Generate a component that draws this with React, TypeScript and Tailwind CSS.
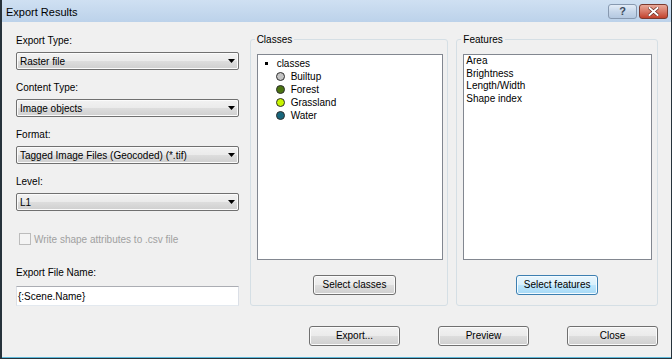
import React from 'react';

const font = "font-['Liberation_Sans',Arial,sans-serif]";

const btnBase =
  'h-[20px] rounded-[3px] border text-[10px] leading-[18px] text-black flex items-center justify-center';
const btnGray =
  'border-[#707070] bg-[linear-gradient(to_bottom,#f2f2f2_0%,#ebebeb_48%,#dddddd_52%,#cfcfcf_100%)] shadow-[inset_0_0_0_1px_#fbfbfb]';
const btnHot =
  'border-[#3c7fb1] bg-[linear-gradient(to_bottom,#eaf6fd_0%,#d9f0fc_48%,#bee6fd_52%,#a7d9f5_100%)] shadow-[inset_0_0_0_1px_#f4fbff]';

const Dropdown = ({ value }: { value: string }) => (
  <div className="h-[18px] w-full flex items-center justify-between rounded-[2px] border border-[#707070] bg-[linear-gradient(to_bottom,#f2f2f2_0%,#ebebeb_48%,#dddddd_52%,#cfcfcf_100%)] shadow-[inset_0_0_0_1px_#fbfbfb] pl-[3px] pr-[3px]">
    <span className="text-[10px] leading-[13px] text-black">{value}</span>
    <svg width="7" height="4" viewBox="0 0 7 4">
      <path d="M0 0h7L3.5 4z" fill="#000" />
    </svg>
  </div>
);

const fields = [
  { label: 'Export Type:', value: 'Raster file' },
  { label: 'Content Type:', value: 'Image objects' },
  { label: 'Format:', value: 'Tagged Image Files (Geocoded) (*.tif)' },
  { label: 'Level:', value: 'L1' },
];

const classes = [
  { name: 'Builtup', color: 'bg-[#c4c4c4]' },
  { name: 'Forest', color: 'bg-[#4b7410]' },
  { name: 'Grassland', color: 'bg-[#c8f400]' },
  { name: 'Water', color: 'bg-[#17667c]' },
];

const features = ['Area', 'Brightness', 'Length/Width', 'Shape index'];

const App: React.FC = () => {
  return (
    <div className={`${font} w-[672px] h-[359px] flex flex-col border-l-2 border-r border-b border-[#26323b] bg-[#f0f0f0] overflow-hidden`}>
      {/* title bar */}
      <div className="h-[22px] flex items-start bg-[linear-gradient(to_bottom,#cfe0f2,#bcd2ea)] pl-[4px] pr-[3px]">
        <span className="text-[11px] leading-[13px] mt-[6px] text-black">Export Results</span>
        <div className="ml-auto mt-[4px] flex gap-[2px]">
          <div className="w-[29px] h-[15px] rounded-[3px] border border-[#8799b0] bg-[linear-gradient(to_bottom,#e3ecf7,#c7d7ea_50%,#b4c8e0)] flex items-center justify-center">
            <span className="text-[11px] leading-[11px] font-bold text-[#3c4a5c]">?</span>
          </div>
          <div className="w-[29px] h-[15px] rounded-[3px] border border-[#7b3a2f] bg-[linear-gradient(to_bottom,#e9a999,#d77866_50%,#c2422d)] flex items-center justify-center">
            <svg width="11" height="9" viewBox="0 0 11 9">
              <path d="M1.5 1L9.5 8M9.5 1L1.5 8" stroke="#5a2018" strokeWidth="3.2" strokeLinecap="square" />
              <path d="M1.5 1L9.5 8M9.5 1L1.5 8" stroke="#fff" strokeWidth="2" strokeLinecap="square" />
            </svg>
          </div>
        </div>
      </div>

      {/* body */}
      <div className="flex-1 flex flex-col border-b border-[#5eb9da] pl-[14px] pr-[13px] pt-[12px]">
        <div className="flex items-start">
          {/* left column */}
          <div className="w-[223px] flex flex-col">
            {fields.map(f => (
              <div key={f.label} className="flex flex-col mb-[11px]">
                <span className="h-[13px] text-[10px] leading-[13px] text-black mb-[5px]">{f.label}</span>
                <Dropdown value={f.value} />
              </div>
            ))}
            <div className="mt-[11px] h-[12px] flex items-center">
              <div className="ml-[3px] w-[12px] h-[12px] border border-[#bcbcbc] bg-[#f4f4f4]" />
              <span className="ml-[3px] text-[10px] leading-[13px] text-[#a0a0a0]">Write shape attributes to .csv file</span>
            </div>
            <span className="mt-[21px] h-[13px] text-[10px] leading-[13px] text-black">Export File Name:</span>
            <div className="mt-[7px] h-[20px] bg-white border border-[#dbdfe6] border-t-[#abadb3] border-b-[#e3e9ef] flex items-center pl-[1px]">
              <span className="text-[10px] leading-[13px] text-black">{'{:Scene.Name}'}</span>
            </div>
          </div>

          {/* classes group */}
          <div className="relative ml-[11px] mt-[5px] w-[199px] h-[267px] rounded-[3px] border border-[#d5dfe5] flex flex-col">
            <span className="absolute -top-[7px] left-[4px] px-[2px] bg-[#f0f0f0] text-[10px] leading-[13px] text-black">Classes</span>
            <div className="ml-[6px] mt-[14px] w-[186px] h-[206px] bg-white border border-[#828790] pt-[1px]">
              <div className="h-[14px] flex items-center pl-[7px]">
                <div className="w-[3px] h-[3px] bg-black" />
                <span className="ml-[9px] text-[10px] leading-[13px] text-black">classes</span>
              </div>
              {classes.map(c => (
                <div key={c.name} className="h-[13px] flex items-center pl-[18px]">
                  <div className={`w-[9px] h-[9px] rounded-full border border-[#2e2e2e] ${c.color}`} />
                  <span className="ml-[6px] text-[10px] leading-[13px] text-black">{c.name}</span>
                </div>
              ))}
            </div>
            <div className="mt-[15px] flex justify-center pl-[11px]">
              <button className={`${btnBase} ${btnGray} w-[83px]`}>Select classes</button>
            </div>
          </div>

          {/* features group */}
          <div className="relative ml-[8px] mt-[5px] w-[202px] h-[267px] rounded-[3px] border border-[#d5dfe5] flex flex-col">
            <span className="absolute -top-[7px] left-[4px] px-[2px] bg-[#f0f0f0] text-[10px] leading-[13px] text-black">Features</span>
            <div className="ml-[6px] mt-[14px] w-[189px] h-[206px] bg-white border border-[#828790] pl-[2px]">
              {features.map(f => (
                <div key={f} className="h-[12.5px] text-[10px] leading-[12.5px] text-black">{f}</div>
              ))}
            </div>
            <div className="mt-[15px] flex justify-center">
              <button className={`${btnBase} ${btnHot} w-[82px]`}>Select features</button>
            </div>
          </div>
        </div>

        {/* dialog buttons */}
        <div className="mt-[20px] flex justify-end gap-[38px]">
          <button className={`${btnBase} ${btnGray} w-[91px]`}>Export...</button>
          <button className={`${btnBase} ${btnGray} w-[91px]`}>Preview</button>
          <button className={`${btnBase} ${btnGray} w-[91px]`}>Close</button>
        </div>
      </div>
    </div>
  );
};

export default App;
